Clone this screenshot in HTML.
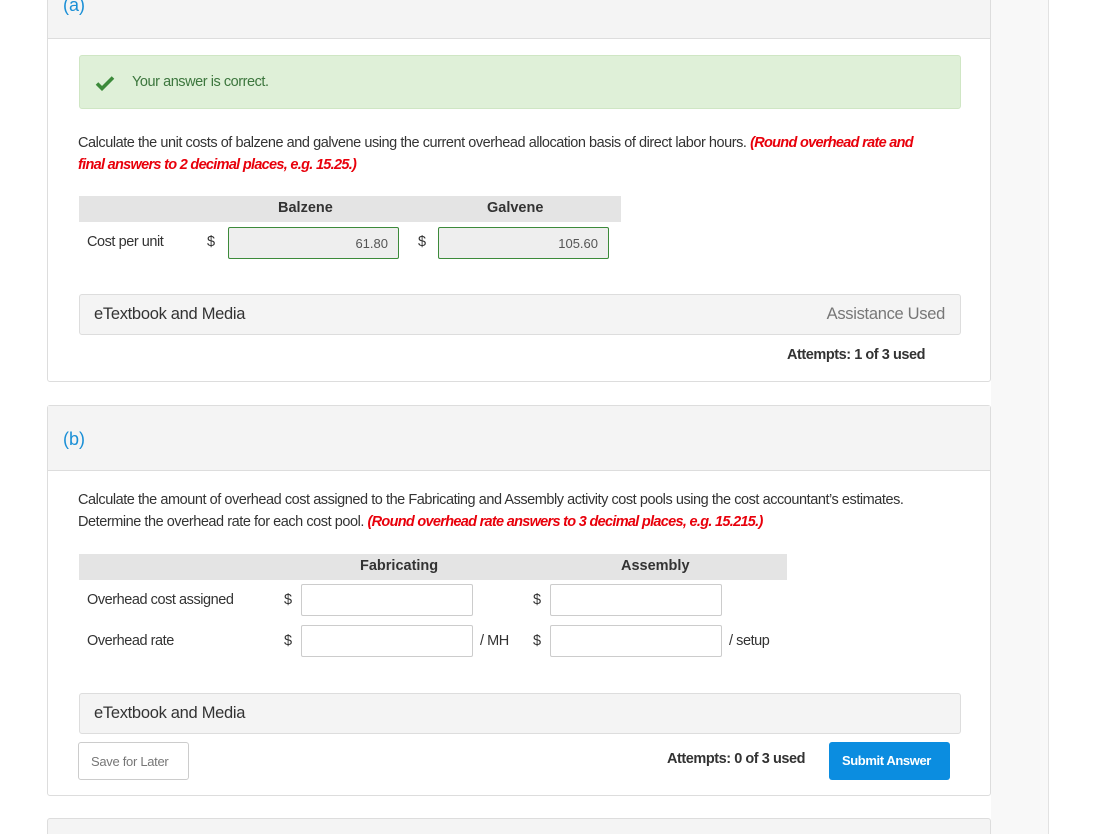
<!DOCTYPE html>
<html><head><style>
*{box-sizing:border-box;margin:0;padding:0}
html,body{width:1106px;height:834px;overflow:hidden}
body{background:#fff;font-family:"Liberation Sans",sans-serif;color:#333;position:relative}
.a{position:absolute}
.card{position:absolute;left:47px;width:944px;border:1px solid #ddd;border-radius:3px;background:#fff}
.hdr{position:absolute;left:0;right:0;top:0;background:#f4f4f4;border-bottom:1px solid #ddd}
.lbl{color:#1a8fd6;font-size:18px}
.t{font-size:14.5px;letter-spacing:-0.45px}
.red{color:#e8000b;font-style:italic;font-weight:bold;letter-spacing:-0.7px}
.th{position:absolute;background:#e4e4e4;height:26px;font-weight:bold;font-size:14.5px}
.inp{position:absolute;height:32px;border:1px solid #ccc;background:#fff;border-radius:2px}
.box{position:absolute;left:31px;width:882px;height:41px;background:#f4f4f4;border:1px solid #ddd;border-radius:3px;font-size:16.5px;padding:10px 14px;letter-spacing:-0.3px}
</style></head><body>
<div class="a" style="left:991px;top:0;width:58px;height:834px;background:#f8f8f8;border-right:1px solid #e2e2e2"></div>

<div class="card" style="top:-6px;height:388px">
 <div class="hdr" style="height:44px"><span class="lbl a" style="left:15px;top:0">(a)</span></div>
 <div class="a" style="left:31px;top:60px;width:882px;height:54px;background:#dff0d8;border:1px solid #cfe6c4;border-radius:3px">
  <svg class="a" style="left:15px;top:19px" width="20" height="16" viewBox="0 0 20 16"><path d="M2 8.5l5 5L18 2.5" stroke="#3c8a3a" stroke-width="3.6" fill="none"/></svg>
  <span class="a t" style="left:52px;top:18px;color:#3c763d">Your answer is correct.</span>
 </div>
 <div class="a t" style="left:30px;top:137px;width:860px;line-height:22px">Calculate the unit costs of balzene and galvene using the current overhead allocation basis of direct labor hours. <span class="red">(Round overhead rate and final answers to 2 decimal places, e.g. 15.25.)</span></div>
 <div class="th" style="left:31px;top:201px;width:542px"><span class="a" style="left:199px;top:4px">Balzene</span><span class="a" style="left:408px;top:4px">Galvene</span></div>
 <span class="a t" style="left:39px;top:239px">Cost per unit</span>
 <span class="a t" style="left:159px;top:239px">$</span>
 <div class="inp" style="left:180px;top:232px;width:171px;background:#eee;border-color:#3c8a3a;font-size:13px;text-align:right;padding:8px 10px;color:#555">61.80</div>
 <span class="a t" style="left:370px;top:239px">$</span>
 <div class="inp" style="left:390px;top:232px;width:171px;background:#eee;border-color:#3c8a3a;font-size:13px;text-align:right;padding:8px 10px;color:#555">105.60</div>
 <div class="box" style="top:299px">eTextbook and Media<span class="a" style="right:15px;top:10px;color:#777">Assistance Used</span></div>
 <span class="a t" style="left:739px;top:352px;font-weight:bold">Attempts: 1 of 3 used</span>
</div>

<div class="card" style="top:405px;height:391px">
 <div class="hdr" style="height:65px"><span class="lbl a" style="left:15px;top:23px">(b)</span></div>
 <div class="a t" style="left:30px;top:83px;width:890px;line-height:22px">Calculate the amount of overhead cost assigned to the Fabricating and Assembly activity cost pools using the cost accountant’s estimates. Determine the overhead rate for each cost pool. <span class="red">(Round overhead rate answers to 3 decimal places, e.g. 15.215.)</span></div>
 <div class="th" style="left:31px;top:148px;width:708px"><span class="a" style="left:281px;top:4px">Fabricating</span><span class="a" style="left:542px;top:4px">Assembly</span></div>
 <span class="a t" style="left:39px;top:186px">Overhead cost assigned</span>
 <span class="a t" style="left:236px;top:186px">$</span>
 <div class="inp" style="left:253px;top:178px;width:172px"></div>
 <span class="a t" style="left:485px;top:186px">$</span>
 <div class="inp" style="left:502px;top:178px;width:172px"></div>
 <span class="a t" style="left:39px;top:227px">Overhead rate</span>
 <span class="a t" style="left:236px;top:227px">$</span>
 <div class="inp" style="left:253px;top:219px;width:172px"></div>
 <span class="a t" style="left:432px;top:227px">/ MH</span>
 <span class="a t" style="left:485px;top:227px">$</span>
 <div class="inp" style="left:502px;top:219px;width:172px"></div>
 <span class="a t" style="left:681px;top:227px">/ setup</span>
 <div class="box" style="top:287px">eTextbook and Media</div>
 <div class="a" style="left:30px;top:336px;width:111px;height:38px;border:1px solid #ccc;border-radius:3px;font-size:13px;color:#777;padding:11px 12px;letter-spacing:-0.3px">Save for Later</div>
 <span class="a t" style="left:619px;top:345px;font-weight:bold;color:#333">Attempts: 0 of 3 used</span>
 <div class="a" style="left:781px;top:336px;width:121px;height:38px;background:#0b8de0;border-radius:3px;color:#fff;font-size:13px;font-weight:bold;padding:11px 13px;letter-spacing:-0.4px">Submit Answer</div>
</div>

<div class="card" style="top:818px;height:40px;background:#f4f4f4"></div>
</body></html>
